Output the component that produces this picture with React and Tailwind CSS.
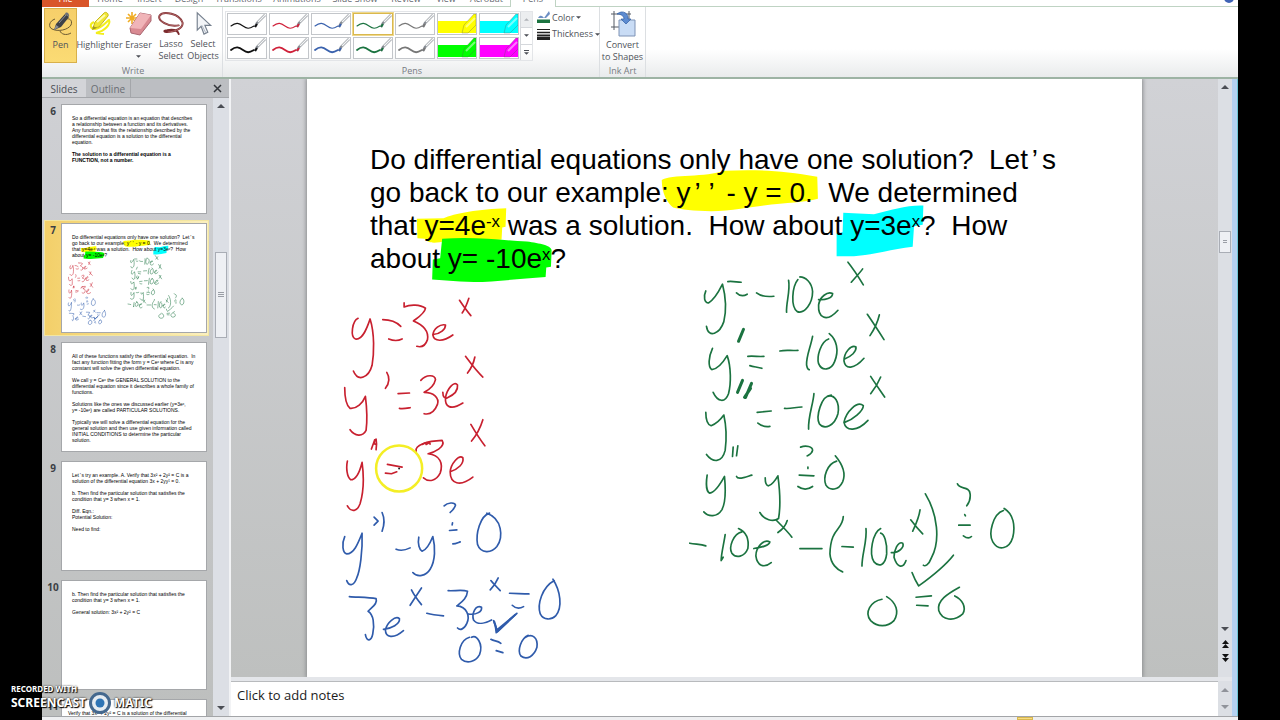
import React, { useState } from "react";

const RED = "#c8202f";
const BLUE = "#2f5bab";
const GREEN = "#1b7340";

// Handwriting on the slide, one block per area. Strokes are kept at 3x so they stay in whole numbers.
const inkBlocks = [
  {
    color: RED,
    origin: [330, 290],
    strokes: [
      // y = 3e^x
      "M84 84C66 92 60 140 76 146C98 150 112 110 120 86C134 130 132 190 126 225C116 262 84 276 70 242",
      "M158 88C180 88 200 96 212 108M176 146C190 152 204 152 216 146",
      "M222 38L222 50C240 42 270 42 286 54C284 70 260 84 250 92C280 104 296 124 292 148C286 166 274 172 260 168",
      "M312 132C330 130 346 118 346 104C330 100 310 116 308 134C312 156 340 154 368 134",
      "M388 30C400 48 410 62 422 76M416 24C412 36 402 60 396 68",
      // y' = 3e^x
      "M44 292C44 320 48 344 60 354C80 356 98 338 106 318C110 350 112 390 108 420C98 440 74 438 60 418",
      "M170 246C180 262 178 278 166 294M204 310L238 308M208 354C218 356 228 354 240 352",
      "M272 270C288 252 314 252 316 268C312 286 294 300 282 306C310 306 328 322 322 342C314 362 300 374 282 370",
      "M338 306C338 320 344 326 352 322C370 314 384 300 382 284C372 270 350 296 346 322C344 348 360 362 398 338",
      "M406 198C424 222 440 244 458 260M434 200C430 220 420 238 412 248",
      // y'' = 3e^x
      "M52 512C48 530 50 560 62 568C80 568 90 540 96 516C102 560 102 600 90 640C82 662 64 668 52 646",
      "M124 476L134 448L132 460L138 462M138 446C140 456 140 466 138 478",
      "M172 522L216 530M166 548L184 550L200 544",
      "M258 482C254 464 290 452 336 450C348 470 310 486 294 490C330 494 340 520 330 548C318 572 296 576 280 562",
      "M276 462L286 457L288 462L298 456L300 461",
      "M360 544C384 536 402 520 398 502C386 492 362 520 360 544C360 580 390 590 428 560",
      "M422 402C436 426 450 448 464 466M458 388C450 414 434 440 424 452",
    ],
  },
  {
    color: BLUE,
    origin: [330, 490],
    strokes: [
      // y'' - y = 0
      "M44 138C34 160 38 188 50 190C72 190 84 158 96 128C98 180 90 240 80 262C72 284 58 290 50 270",
      "M132 80L144 92L132 104M156 66C164 84 162 106 156 122M198 176C212 182 228 178 240 172",
      "M266 140C262 160 268 178 276 182C290 178 300 158 308 138C316 170 316 210 300 236C288 256 262 262 248 246",
      "M342 46C352 36 374 34 376 44C374 54 366 60 360 66M367 97L366 103M358 120L380 118M368 160C376 160 384 156 390 154",
      "M478 68C450 76 436 130 442 162C452 190 484 188 500 168C520 140 516 84 470 68",
      // 3e^x - 3e^x = 0
      "M58 318C80 320 116 320 138 324C144 340 124 350 114 362C130 372 134 400 128 430C124 450 110 456 106 432",
      "M160 416C184 414 210 400 208 384C196 374 170 396 166 418C166 440 190 446 220 420",
      "M244 298C252 314 264 330 274 342M274 292C262 310 250 328 240 344M290 368C306 372 322 374 340 376",
      "M354 300C370 302 396 296 412 302C410 324 394 334 380 346C410 348 420 376 410 398C402 416 390 420 382 412",
      "M414 370C440 374 456 362 454 350C436 340 424 370 430 388C442 404 466 398 484 388",
      "M482 270C490 280 500 290 510 300M504 262C498 276 488 290 480 298",
      "M538 308C556 308 576 310 596 310M546 344C556 354 566 356 580 348",
      "M672 270C636 290 620 340 630 370C640 390 664 388 676 376C698 350 690 300 668 266",
      "M490 390C496 402 498 414 498 426L560 368L500 418L494 400",
      // 0 = 0
      "M418 440C390 448 380 490 394 506C410 520 436 514 448 492C460 460 440 432 424 440",
      "M482 446C492 452 502 450 512 458M498 480L518 486",
      "M594 434C572 444 560 480 572 496C590 510 612 496 620 470C624 440 606 428 586 440",
    ],
  },
  {
    color: GREEN,
    origin: [680, 250],
    strokes: [
      // y = -10e^x
      "M76 122C68 140 72 158 84 158C100 150 116 122 126 102C136 140 138 180 130 214C118 250 84 266 78 228",
      "M142 94C156 92 170 96 182 96M168 128C178 138 190 138 200 132M228 128C240 138 260 140 280 138",
      "M324 90C330 120 316 160 318 186",
      "M352 88C334 110 330 170 350 184C372 192 396 160 396 124C394 96 374 80 358 80",
      "M414 148C434 150 456 144 456 130C440 122 418 140 414 164C412 200 436 220 472 180",
      "M502 36C518 56 536 84 548 104M546 56C536 70 522 84 512 96",
      // y' = -10e^x
      "M96 294C84 320 82 350 94 358C114 356 128 336 140 316C152 350 152 400 144 430C134 458 112 456 98 426",
      "M202 318C220 316 236 320 250 318M208 346C220 350 232 350 244 354M298 302C316 298 334 302 352 300",
      "M396 258C390 290 376 320 378 344C380 354 384 358 386 358",
      "M444 266C420 274 408 320 414 340C424 364 452 360 462 334C476 300 468 268 446 250",
      "M492 326C512 318 528 304 526 290C512 282 490 306 490 332C494 358 520 358 550 324",
      "M560 192C578 218 596 246 610 268M596 194C590 220 576 244 568 256",
      // y'' = -10e^x
      "M76 486C76 506 80 522 92 526C108 520 120 508 130 494C138 530 138 570 134 600C124 640 96 636 78 612",
      "M230 486L272 482M232 518C244 528 256 530 268 528M312 474C330 476 346 470 364 470",
      "M400 430C398 460 382 500 384 536",
      "M452 434C420 436 406 500 416 520C432 540 462 526 472 490C478 456 462 430 440 438",
      "M492 516C516 508 548 482 548 466C530 450 496 484 490 516C496 544 530 544 562 510",
      "M570 378C584 400 600 422 612 440M600 380C592 400 578 420 570 430",
    ],
  },
  {
    color: GREEN,
    origin: [680, 440],
    strokes: [
      // y'' - y = 0
      "M158 20L156 48M172 16L168 46",
      "M80 104C76 130 78 154 88 158C104 156 120 130 132 108C136 150 134 190 124 208C110 230 84 230 70 214",
      "M168 108C172 120 200 108 214 104",
      "M254 112C254 128 258 136 264 136C276 132 284 120 292 106C298 150 300 200 294 234C278 246 250 238 238 216",
      "M360 20C376 14 396 18 396 30C394 40 388 42 380 46M382 80L382 84M356 104L400 106M352 138C366 148 382 148 396 138",
      "M468 62C440 70 426 110 436 134C448 152 474 150 486 124C498 96 484 70 464 46",
      // -10e^x - (-10e^x) = 0
      "M28 308C44 312 60 310 76 316M134 282C130 310 122 340 122 360L128 350",
      "M184 274C158 280 144 320 154 338C166 354 192 350 202 324C206 296 196 274 174 264",
      "M220 324C244 320 266 316 268 304C250 294 226 320 226 346C230 376 250 384 272 366",
      "M288 240C302 254 322 274 334 290M320 240C316 254 304 268 292 276M358 324L424 324",
      "M488 228C486 270 450 260 448 340C450 370 470 388 486 394M484 318L518 320",
      "M556 264C560 300 544 340 544 376",
      "M600 264C576 276 564 340 580 364C594 380 614 376 618 340C620 304 610 280 600 278",
      "M632 336C654 338 672 320 666 308C652 300 640 330 640 350C650 384 668 384 676 360",
      "M690 238C702 254 714 268 726 280M718 208C714 236 700 262 696 272",
      "M734 160C770 220 780 300 752 352C744 374 732 378 728 374",
      "M830 130C836 148 866 136 868 160C870 176 864 188 858 196M852 222L854 226M834 254L868 254M848 286C856 292 866 294 872 288",
      "M968 210C936 220 922 280 936 304C954 334 986 324 996 290C1004 256 998 220 970 204",
      "M694 396C700 412 706 424 714 436C750 410 790 380 818 344",
      // 0 = 0
      "M604 476C570 482 550 516 570 540C590 560 620 560 640 540C656 516 648 486 618 468",
      "M706 470L752 466M708 494L742 496",
      "M836 440C800 460 768 480 774 510C784 540 820 544 846 520C858 500 844 476 822 466",
    ],
  },
];

const slideView = "307 79 834 624";

function Highlights() {
  return (
    <svg viewBox={slideView} className="absolute top-0 left-0 w-full" aria-hidden="true">
      <g transform="translate(640 130) scale(.3333)">
        <path fill="#ff0" d="M64 150C90 132 200 142 250 122C340 118 420 120 530 140L532 206C480 220 420 216 300 236C220 250 130 240 98 232C80 218 64 190 64 150Z" />
        <path fill="#0ff" d="M608 248L700 252C750 240 800 224 848 226L846 284L820 288L816 350C750 358 700 374 640 378L588 378L588 310L606 306Z" />
      </g>
      <g transform="translate(300 130) scale(.3333)">
        <path fill="#ff0" d="M350 266L430 264C460 250 540 236 618 234L616 290L606 292L604 328C550 334 480 330 440 332C400 342 380 338 374 326L352 324Z" />
        <path fill="#0f0" d="M426 326C520 318 600 330 680 334C720 340 756 346 754 362L752 410L738 412L736 440C640 446 560 460 480 454L396 448L398 388L420 384Z" />
      </g>
    </svg>
  );
}

function Ink({ width = 5 }) {
  return (
    <svg viewBox={slideView} className="absolute top-0 left-0 w-full" fill="none" strokeLinecap="round" strokeLinejoin="round" aria-hidden="true">
      {inkBlocks.map((block, i) => (
        <g key={i} stroke={block.color} strokeWidth={width} transform={`translate(${block.origin[0]} ${block.origin[1]}) scale(.3333)`}>
          {block.strokes.map((d) => (
            <path key={d} d={d} />
          ))}
        </g>
      ))}
      <path stroke={GREEN} strokeWidth="3" d="M743 329L738 341M742 380L737 392M751 383L745 397M750 388L744 397" />
      <path stroke={BLUE} strokeWidth="2" d="M494 621L497 631L515 614" />
    </svg>
  );
}

function Sup({ children }) {
  return <sup className="text-[60%]">{children}</sup>;
}

// East Asian style quote, half an em wide
function Quote() {
  return <span className="inline-block w-[0.5em] text-center">’</span>;
}

function QuestionText() {
  return (
    <>
      <p>Do differential equations only have one solution?{"  "}Let<Quote />s</p>
      <p>go back to our example: y<Quote /><Quote /> - y = 0.{"  "}We determined</p>
      <p>that y=4e<Sup>-x</Sup> was a solution.{"  "}How about y=3e<Sup>x</Sup>?{"  "}How</p>
      <p>about y= -10e<Sup>x</Sup>?</p>
    </>
  );
}

const slides = [
  {
    number: 6,
    body: (
      <>
        <p>So a differential equation is an equation that describes</p>
        <p>a relationship between a function and its derivatives.</p>
        <p>Any function that fits the relationship described by the</p>
        <p>differential equation is a solution to the differential</p>
        <p>equation.</p>
        <br />
        <p className="font-bold">The solution to a differential equation is a</p>
        <p className="font-bold">FUNCTION, not a number.</p>
      </>
    ),
  },
  { number: 7, body: <QuestionText />, ink: true },
  {
    number: 8,
    body: (
      <>
        <p>All of these functions satisfy the differential equation.{"  "}In</p>
        <p>fact any function fitting the form y = Ce<Sup>x</Sup> where C is any</p>
        <p>constant will solve the given differential equation.</p>
        <br />
        <p>We call y = Ce<Sup>x</Sup> the GENERAL SOLUTION to the</p>
        <p>differential equation since it describes a whole family of</p>
        <p>functions.</p>
        <br />
        <p>Solutions like the ones we discussed earlier (y=3e<Sup>x</Sup>,</p>
        <p>y= -10e<Sup>x</Sup>) are called PARTICULAR SOLUTIONS.</p>
        <br />
        <p>Typically we will solve a differential equation for the</p>
        <p>general solution and then use given information called</p>
        <p>INITIAL CONDITIONS to determine the particular</p>
        <p>solution.</p>
      </>
    ),
  },
  {
    number: 9,
    body: (
      <>
        <p>Let<Quote />s try an example. A. Verify that 3x² + 2y² = C is a</p>
        <p>solution of the differential equation 3x + 2yy<Sup>1</Sup> = 0.</p>
        <br />
        <p>b. Then find the particular solution that satisfies the</p>
        <p>condition that y= 3 when x = 1.</p>
        <br />
        <p>Diff. Eqn.:</p>
        <p>Potential Solution:</p>
        <br />
        <p>Need to find:</p>
      </>
    ),
  },
  {
    number: 10,
    body: (
      <>
        <p>b. Then find the particular solution that satisfies the</p>
        <p>condition that y= 3 when x = 1.</p>
        <br />
        <p>General solution: 3x² + 2y² = C</p>
      </>
    ),
  },
  {
    number: 11,
    tight: true,
    body: (
      <>
        <p>Verify that 3x² + 2y² = C is a solution of the differential</p>
        <p>equation 3x + 2yy<Sup>1</Sup> = 0.</p>
      </>
    ),
  },
];

const penColors = ["#111111", "#d0213a", "#3a62ae", "#1b7340", "#777777"];
const markers = [
  ["#ffff00", "#00ffff"],
  ["#00ff00", "#ff00ff"],
];

function PenSwatch({ color, bold, selected }) {
  return (
    <button
      aria-label={`Pen ${color}`}
      className={`flex h-[22px] w-10 items-center justify-center border bg-white ${
        selected ? "border-[#d9b84e] ring-1 ring-[#efd88c]" : "border-[#c3c6ca]"
      }`}
    >
      <svg width="38" height="20" viewBox="0 0 38 20" fill="none">
        <path d="M3 12C8 8 11 9 15 12S21 15 26 12" stroke={color} strokeWidth={bold ? 1.8 : 1.1} strokeLinecap="round" />
        <path d="M27 13L29 9L37 1" stroke="#8a8f96" strokeWidth="2.500" />
        <path d="M30 8L37 1" stroke="#f4f5f6" strokeWidth="1.500" />
        <path d="M27 13L29 10" stroke={color} strokeWidth="2" />
      </svg>
    </button>
  );
}

function MarkerSwatch({ color }) {
  return (
    <button aria-label={`Highlighter ${color}`} className="h-[22px] w-10 border border-[#c3c6ca] bg-white">
      <svg width="38" height="20" viewBox="0 0 38 20">
        <path d="M0 7H38V19H0Z" fill={color} />
        <path d="M24 19L26 11L36 0H38V11L30 19Z" fill={color} stroke="#5558" strokeWidth=".6" />
        <path d="M28 13L37 4" stroke="#fff7" strokeWidth="2" />
      </svg>
    </button>
  );
}

function Arrow({ up, small, color = "#4b4e55" }) {
  return (
    <svg width={small ? 5 : 8} height={small ? 3 : 4} viewBox="0 0 8 4" aria-hidden="true">
      <path d={up ? "M0 4L4 0L8 4Z" : "M0 0L4 4L8 0Z"} fill={color} />
    </svg>
  );
}

function PenIcon() {
  return (
    <svg width="26" height="26" viewBox="0 0 26 26" fill="none">
      <path d="M7 8C1 10 0 16 4 18C10 21 20 19 23 14C25 9 21 7 18 8M12 20C13 23 18 25 23 22" stroke="#6b5a32" strokeWidth="1" />
      <path d="M6 19L8 13L17 3L21 6L13 16Z" fill="#3d4148" />
      <path d="M17 3C18 0 22 2 21 6Z" fill="#6a6f78" />
      <path d="M11 12L18 4" stroke="#8b9098" />
      <path d="M6 19L8 14L11 16Z" fill="#8a8d92" />
    </svg>
  );
}

function HighlighterIcon() {
  return (
    <svg width="26" height="26" viewBox="0 0 26 26" fill="none">
      <path d="M7 11C2 13 3 18 8 18C14 18 20 10 22 9C24 13 18 20 9 22L17 23" stroke="#f3ee1c" strokeWidth="2" />
      <path d="M6 17L8 11L17 2C19 0 22 3 21 5L12 16Z" fill="#f1e735" stroke="#c6b81c" />
      <path d="M10 11L18 4" stroke="#fffbb0" strokeWidth="2" />
      <path d="M5 19L6 15L10 17Z" fill="#a39822" />
    </svg>
  );
}

function EraserIcon() {
  return (
    <svg width="26" height="26" viewBox="0 0 26 26" fill="none">
      <path d="M6 1V13M0 7H12M2 3L10 11M10 3L2 11" stroke="#f0ac23" strokeWidth="1.600" />
      <path d="M4 17L14 2L25 4L25 10L14 24L5 22Z" fill="#d98a92" stroke="#a96670" />
      <path d="M4 17L14 2L25 4L15 18Z" fill="#f0b4b8" />
    </svg>
  );
}

function LassoIcon() {
  return (
    <svg width="26" height="26" viewBox="0 0 26 26" fill="none" strokeLinecap="round">
      <path d="M21 15C10 17-1 10 1 5C5-1 22 3 25 12C26 18 18 21 10 22C5 22 5 20 9 20C15 19 20 20 21 24" stroke="#7c2b2e" strokeWidth="2" />
      <path d="M21 15C10 17-1 10 1 5C5-1 22 3 25 12C26 18 18 21 10 22" stroke="#c98080" strokeWidth=".7" />
    </svg>
  );
}

function SelectIcon() {
  return (
    <svg width="26" height="26" viewBox="0 0 26 26">
      <path d="M7 2V20L11 16L14 24L18 22L15 15H21Z" fill="#f3f5f8" stroke="#76808e" strokeWidth="1.200" />
      <path d="M12 15L16 23" stroke="#aeb6c2" />
    </svg>
  );
}

const tools = [
  { label: "Pen", icon: <PenIcon />, width: "w-[33px]" },
  { label: "Highlighter", icon: <HighlighterIcon />, width: "w-[45px]" },
  { label: "Eraser", icon: <EraserIcon />, width: "w-[33px]", menu: true },
  { label: "Lasso", second: "Select", icon: <LassoIcon />, width: "w-[32px]" },
  { label: "Select", second: "Objects", icon: <SelectIcon />, width: "w-[32px]" },
];

function Ribbon() {
  const [tool, setTool] = useState("Pen");
  return (
    <section className="flex h-[72px] shrink-0 overflow-hidden border-b-2 border-[#9db3a4] bg-gradient-to-b from-white from-60% to-[#e9ebec] text-[9px] leading-[12px] text-[#4f535a]">
      <div className="flex w-[181px] flex-col justify-between border-r border-[#dcdfe2] pt-px pl-0.5">
        <div className="flex">
          {tools.map((t) => (
            <button
              key={t.label}
              onClick={() => setTool(t.label)}
              className={`flex h-[55px] flex-col items-center border pt-0.5 whitespace-nowrap ${t.width} ${
                tool === t.label ? "border-[#d8b04a] bg-gradient-to-b from-[#f6cf6a] to-[#fbdb74]" : "border-transparent"
              }`}
            >
              {t.icon}
              <span className="pt-0.5">{t.label}</span>
              {t.second && <span>{t.second}</span>}
              {t.menu && (
                <span className="pt-1">
                  <Arrow small />
                </span>
              )}
            </button>
          ))}
        </div>
        <p className="text-center text-[#777b82]">Write</p>
      </div>

      <div className="flex w-[377px] flex-col justify-between border-r border-[#dcdfe2] pt-1 pl-0.5">
        <div className="flex">
          <div className="flex border border-[#e3e5e8]">
            <div className="grid grid-cols-[repeat(7,40px)] gap-0.5 p-px">
              {penColors.map((c, i) => (
                <PenSwatch key={c} color={c} selected={i === 3} />
              ))}
              {markers[0].map((c) => (
                <MarkerSwatch key={c} color={c} />
              ))}
              {penColors.map((c) => (
                <PenSwatch key={c} color={c} bold />
              ))}
              {markers[1].map((c) => (
                <MarkerSwatch key={c} color={c} />
              ))}
            </div>
            <div className="flex w-3 flex-col border-l border-[#d5d8dc]">
              <button aria-label="Previous pens" className="flex flex-1 items-center justify-center bg-[#eceef0]">
                <Arrow up small color="#b0b3b8" />
              </button>
              <button aria-label="Next pens" className="flex flex-1 items-center justify-center border-y border-[#d5d8dc]">
                <Arrow small />
              </button>
              <button aria-label="More pens" className="flex flex-1 flex-col items-center justify-center gap-px">
                <span className="h-px w-[5px] bg-[#4b4e55]" />
                <Arrow small />
              </button>
            </div>
          </div>
          <div className="flex flex-col gap-1 pl-1">
            <button className="flex items-center gap-0.5">
              <svg width="13" height="13" viewBox="0 0 13 13">
                <path d="M1 7C3 3 6 5 7 7L12 0L13 3L9 7Z" fill="#6d8fc4" />
                <path d="M0 8.500H13V12H0Z" fill={GREEN} />
              </svg>
              Color <Arrow small />
            </button>
            <button className="flex items-center gap-0.5">
              <svg width="13" height="12" viewBox="0 0 13 12" stroke="#222">
                <path d="M0 1.500H13" />
                <path d="M0 4.500H13" strokeWidth="1.500" />
                <path d="M0 7.500H13" strokeWidth="2" />
                <path d="M0 10.500H13" strokeWidth="3" />
              </svg>
              Thickness <Arrow small />
            </button>
          </div>
        </div>
        <p className="text-center text-[#777b82]">Pens</p>
      </div>

      <div className="flex w-[46px] flex-col justify-between border-r border-[#dcdfe2] pt-1">
        <button className="flex flex-col items-center whitespace-nowrap">
          <svg width="26" height="26" viewBox="0 0 26 26" fill="none">
            <path d="M4 0V19M1 3H21M19 0V10M1 16H10" stroke="#555b64" />
            <path d="M9 9H25V25H9Z" fill="#c9dcf5" stroke="#7e93b5" />
            <path d="M7 3C13-2 19 3 18 8H21L16 13L11 8H14C14 5 11 3 7 3Z" fill="#5d8bd0" stroke="#2f5da3" strokeWidth=".7" />
          </svg>
          <span className="pt-0.5">Convert</span>
          <span>to Shapes</span>
        </button>
        <p className="text-center text-[#777b82]">Ink Art</p>
      </div>
    </section>
  );
}

function Thumbnail({ slide, selected, onSelect }) {
  return (
    <li className="mb-[3px] shrink-0">
      <button
        onClick={onSelect}
        className={`flex h-[116px] w-full border pt-0.5 text-left ${
          selected ? "border-[#f3e6a2] bg-gradient-to-r from-[#f3cf69] via-[#f8e08c] to-[#fbf0c0]" : "border-transparent"
        }`}
      >
        <span className="w-4 shrink-0 text-center text-[10px] leading-[15px] font-bold text-[#3c3f45]">{slide.number}</span>
        <div
          className={`relative h-[110px] w-[146px] shrink-0 overflow-hidden border border-[#a5a7aa] bg-white pt-[10px] font-['Liberation_Sans',sans-serif] text-[5px] leading-[6px] whitespace-pre text-black ${
            slide.tight ? "pl-1.5" : "pl-2.5"
          }`}
        >
          {slide.ink && <Highlights />}
          <div className="relative">{slide.body}</div>
          {slide.ink && <Ink width={9} />}
        </div>
      </button>
    </li>
  );
}

function SlidePane() {
  const [current, setCurrent] = useState(7);
  return (
    <aside className="flex w-[187px] shrink-0 flex-col">
      <div className="flex h-[19px] shrink-0 items-stretch border-b border-[#a4a6aa] bg-[#bcbec2] text-[10px] text-[#4a4d53]">
        <button className="w-11 bg-[#d3d4d8] pt-0.5">Slides</button>
        <button className="w-[45px] border-r border-[#a4a6aa] pt-0.5 text-[#6a6d73]">Outline</button>
        <button aria-label="Close" className="ml-auto flex w-6 items-center justify-center">
          <svg width="9" height="9" viewBox="0 0 9 9" stroke="#33363b" strokeWidth="1.500">
            <path d="M1 1L8 8M8 1L1 8" />
          </svg>
        </button>
      </div>
      <div className="flex min-h-0 flex-1 bg-gradient-to-b from-[#cfd0d4] to-[#bdbfbe]">
        <ul className="flex min-w-0 flex-1 flex-col overflow-hidden pt-[3px] pr-1 pl-0.5">
          {slides.map((s) => (
            <Thumbnail key={s.number} slide={s} selected={s.number === current} onSelect={() => setCurrent(s.number)} />
          ))}
        </ul>
        <div className="flex w-4 flex-col items-center bg-[#dcdfe5]">
          <button aria-label="Scroll up" className="flex h-4 items-center">
            <Arrow up />
          </button>
          <div className="flex-[138]" />
          <div className="flex w-3 flex-[84] flex-col items-center justify-center gap-px border border-[#a9adb5] bg-[#eef0f4]">
            <span className="h-px w-1.5 bg-[#9a9ea6]" />
            <span className="h-px w-1.5 bg-[#9a9ea6]" />
            <span className="h-px w-1.5 bg-[#9a9ea6]" />
          </div>
          <div className="flex-[363]" />
          <button aria-label="Scroll down" className="flex h-4 items-center">
            <Arrow />
          </button>
        </div>
      </div>
    </aside>
  );
}

function DoubleArrow({ up }) {
  return (
    <svg width="7" height="8" viewBox="0 0 7 8" fill="#111" aria-hidden="true">
      <path d={up ? "M0 4L3.500 0L7 4ZM0 8L3.500 4L7 8Z" : "M0 0L3.500 4L7 0ZM0 4L3.500 8L7 4Z"} />
    </svg>
  );
}

function Editor() {
  return (
    <main className="flex min-w-0 flex-1 flex-col border-l-2 border-[#f2f3f5]">
      <div className="flex min-h-0 flex-1 bg-gradient-to-b from-[#d1d2d6] to-[#bec0bf]">
        <div className="min-w-0 flex-1 overflow-hidden px-[76px]">
          <article className="relative h-full overflow-hidden bg-white pt-16 pl-[63px] font-['Liberation_Sans',sans-serif] text-[28px] leading-[33px] whitespace-pre text-black shadow-[0_0_4px_1px_#8a8c8e]">
            <Highlights />
            <div className="relative">
              <QuestionText />
            </div>
            <Ink />
            {/* pointer halo */}
            <svg viewBox={slideView} className="absolute top-0 left-0 w-full" fill="none" aria-hidden="true">
              <circle cx="399" cy="468" r="23" stroke="#f4ee25" strokeWidth="2.500" />
              <circle cx="399" cy="468" r="1" fill="#222" />
            </svg>
          </article>
        </div>
        <div className="flex w-3.5 shrink-0 flex-col items-center bg-[#dcdfe4]">
          <button aria-label="Previous" className="flex h-4 items-center">
            <Arrow up />
          </button>
          <div className="flex-[136]" />
          <div className="flex w-3 flex-[20] flex-col items-center justify-center gap-px border border-[#a9adb5] bg-[#eef0f4]">
            <span className="h-px w-1 bg-[#9a9ea6]" />
            <span className="h-px w-1 bg-[#9a9ea6]" />
          </div>
          <div className="flex-[369]" />
          <button aria-label="Next" className="flex h-4 items-center">
            <Arrow />
          </button>
          <button aria-label="Previous slide" className="flex h-3.5 items-center">
            <DoubleArrow up />
          </button>
          <button aria-label="Next slide" className="mb-3 flex h-3.5 items-center">
            <DoubleArrow />
          </button>
        </div>
      </div>
      <div className="flex h-[39px] shrink-0 border-t-4 border-[#e4e6ea] bg-white">
        <textarea
          aria-label="Notes"
          placeholder="Click to add notes"
          className="min-w-0 flex-1 resize-none overflow-hidden border-t border-[#b8babd] px-1.5 pt-1 text-[13px] leading-[18px] placeholder:text-[#1b1b1b]"
        />
        <div className="flex w-3.5 flex-col items-center justify-around bg-[#dcdfe4]">
          <Arrow up color="#90939a" />
          <Arrow color="#90939a" />
        </div>
      </div>
    </main>
  );
}

const tabs = [
  { label: "Home", width: "w-[42px]" },
  { label: "Insert", width: "w-[37px]" },
  { label: "Design", width: "w-[42px]" },
  { label: "Transitions", width: "w-[57px]" },
  { label: "Animations", width: "w-[60px]" },
  { label: "Slide Show", width: "w-[56px]" },
  { label: "Review", width: "w-[46px]" },
  { label: "View", width: "w-[34px]" },
  { label: "Acrobat", width: "w-[47px]" },
];

function Watermark() {
  return (
    <div className="absolute bottom-[7px] left-[11px] font-['Noto_Sans',sans-serif] font-bold text-white [text-shadow:0_0_2px_#000,1px_1px_1px_#000]">
      <p className="text-[8px] leading-[8px]">RECORDED WITH</p>
      <div className="flex items-center gap-0.5 text-[12px] leading-[20px]">
        <span>SCREENCAST</span>
        <svg width="24" height="24" viewBox="0 0 24 24" className="-my-0.5" aria-hidden="true">
          <circle cx="12" cy="12" r="9.500" fill="#e6ecf2" stroke="#44688e" strokeWidth="3" />
          <circle cx="12" cy="12" r="4.500" fill="#2e74b5" />
        </svg>
        <span>MATIC</span>
      </div>
    </div>
  );
}

function App() {
  return (
    <div className="relative flex h-screen flex-col overflow-hidden bg-black px-[42px] font-['Open_Sans',sans-serif]">
      <nav className="flex h-[7px] shrink-0 items-end bg-white text-[9px] leading-[12px] text-[#63676e] shadow-[inset_0_-1px_0_#bfd3c3]">
        <button className="w-[47px] shrink-0 bg-[#d9552a] pb-0.5 text-white">File</button>
        {tabs.map((t) => (
          <button key={t.label} className={`shrink-0 pb-0.5 whitespace-nowrap ${t.width}`}>
            {t.label}
          </button>
        ))}
        <button className="w-[46px] shrink-0 border-x border-[#bfd3c3] bg-white pb-0.5">Pens</button>
        <svg width="10" height="10" viewBox="0 0 10 10" className="mr-1 mb-1 ml-auto shrink-0" aria-hidden="true">
          <circle cx="5" cy="5" r="5" fill="#3f63b5" />
        </svg>
      </nav>
      <Ribbon />
      <div className="flex min-h-0 flex-1">
        <SlidePane />
        <Editor />
        <div className="w-1.5 shrink-0 border-r border-[#6fc6d3] bg-[#b5d1f0]" />
      </div>
      <footer className="flex h-1 shrink-0 justify-end border-t border-[#a3a5a8] bg-[#eeeff1]">
        <span className="mr-[205px] w-4 border border-[#d9b84e] bg-[#f8dc84]" />
      </footer>
      <Watermark />
    </div>
  );
}

export default App;
